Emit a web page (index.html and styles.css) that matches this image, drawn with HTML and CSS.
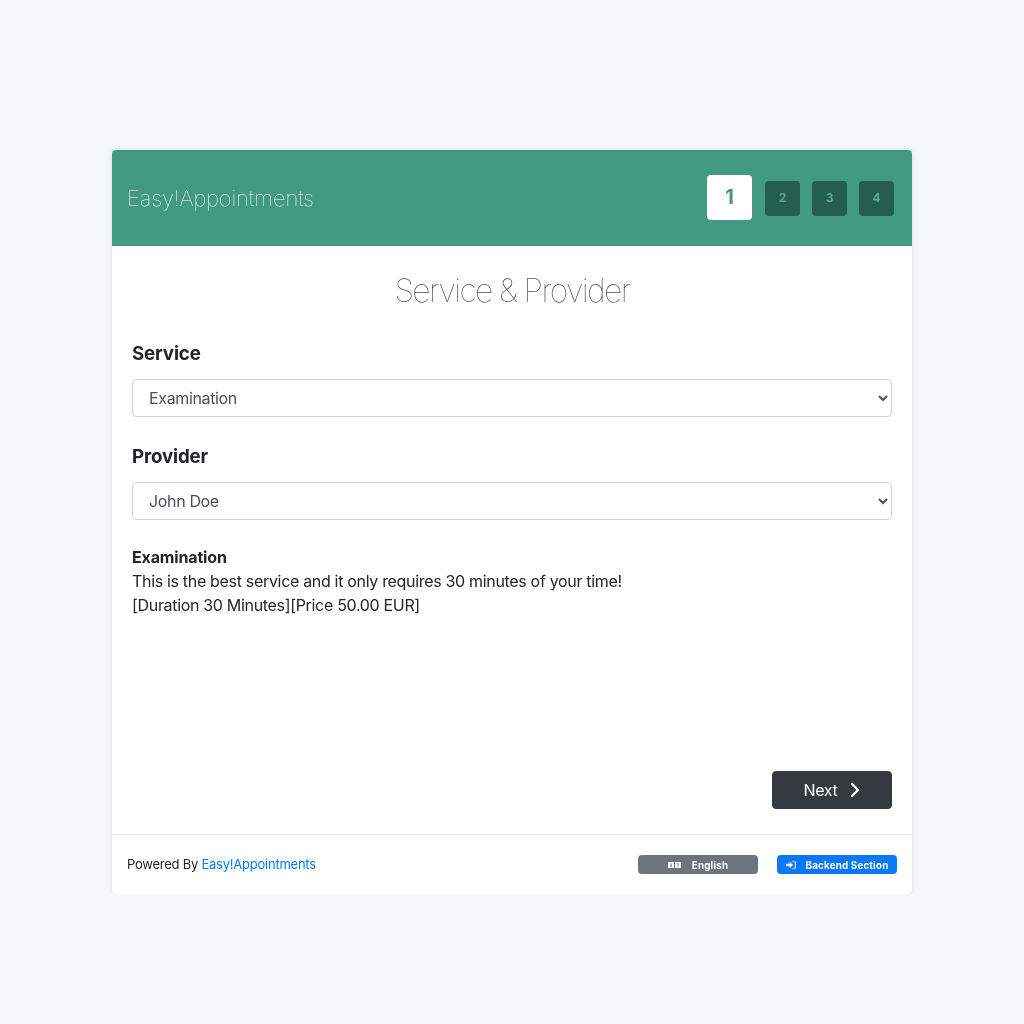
FILE: index.html
```html
<!DOCTYPE html>
<html lang="en">
<head>
<meta charset="utf-8">
<title>Easy!Appointments</title>
<link rel="stylesheet" href="styles.css">
</head>
<body>
<main class="card">
  <header class="header">
    <span class="brand">Easy!Appointments</span>
    <div class="steps">
      <div class="step active">1</div>
      <div class="step">2</div>
      <div class="step">3</div>
      <div class="step">4</div>
    </div>
  </header>
  <section class="content">
    <h2 class="title">Service &amp; Provider</h2>
    <div class="field">
      <label class="label" for="service">Service</label>
      <select class="select" id="service"><option>Examination</option></select>
    </div>
    <div class="field">
      <label class="label" for="provider">Provider</label>
      <select class="select" id="provider"><option>John Doe</option></select>
    </div>
    <div class="details">
      <strong>Examination</strong><br>
      This is the best service and it only requires 30 minutes of your time!<br>
      [Duration 30 Minutes][Price 50.00 EUR]
    </div>
    <div class="command">
      <button class="next" type="button">Next
        <svg class="chev" viewBox="0 0 12 16" width="12" height="16"><path d="M3 2l6 6-6 6" fill="none" stroke="currentColor" stroke-width="2.4" stroke-linecap="round" stroke-linejoin="round"/></svg>
      </button>
    </div>
  </section>
  <footer class="footer">
    <span class="powered">Powered By <a class="link" href="#">Easy!Appointments</a></span>
    <div class="actions">
      <a class="pill grey" href="#">
        <svg class="pill-icon" viewBox="0 0 13 6" width="13" height="6"><path fill="currentColor" d="M0 0h6v6H0zM7 0h6v6H7z"/><path fill="#6c757d" d="M2 4.800L2.800 1.200h.4L4 4.800H3.300L3.150 4h-.3L2.700 4.800zM8.800 1.500h2.400v.7h-.8v2.500h-.8V2.200h-.8z"/></svg>
        <span>English</span>
      </a>
      <a class="pill blue" href="#">
        <svg class="pill-icon" viewBox="0 0 12 10" width="10" height="8"><path fill="currentColor" d="M4.500.8L8.600 5 4.500 9.200V6.500H0v-3h4.500zM8 0h2.500A1.500 1.500 0 0 1 12 1.500v7A1.500 1.500 0 0 1 10.500 10H8V8.800h2.300a.5.500 0 0 0 .5-.5V1.700a.5.500 0 0 0-.5-.5H8z"/></svg>
        <span>Backend Section</span>
      </a>
    </div>
  </footer>
</main>
</body>
</html>
```
FILE: styles.css
```css
* { box-sizing: border-box; }
html, body { margin: 0; padding: 0; }
body {
  background: #f4f8fb;
  font-family: Inter, "Liberation Sans", sans-serif;
  font-size: 16px;
  line-height: 24px;
  color: #212529;
  padding-top: 150px;
}
.card {
  width: 800px;
  height: 744px;
  margin: 0 auto;
  background: #fff;
  border-radius: 4px;
  box-shadow: 0 1px 6px rgba(0, 0, 0, 0.1);
  display: flex;
  flex-direction: column;
  overflow: hidden;
  will-change: opacity;
}
.header {
  height: 96px;
  flex: none;
  background: #429a82;
  display: flex;
  align-items: center;
  justify-content: space-between;
  padding: 0 18px 0 15px;
}
.brand {
  color: #fff;
  font-size: 22px;
  font-weight: 100;
  letter-spacing: -0.12px;
}
.steps { display: flex; align-items: center; gap: 12px; }
.step {
  width: 35px;
  height: 35px;
  border-radius: 4px;
  background: #255d4e;
  color: #50b08f;
  font-size: 12px;
  font-weight: 700;
  display: flex;
  align-items: center;
  justify-content: center;
}
.step.active {
  width: 45px;
  height: 45px;
  margin-right: 1px;
  margin-bottom: 2px;
  background: #fff;
  color: #429a82;
  font-size: 20px;
}
.content {
  flex: 1;
  padding: 0 20px;
  display: flex;
  flex-direction: column;
}
.title {
  margin: 24px 0 28px;
  font-size: 32px;
  line-height: 42px;
  font-weight: 100;
  color: #495057;
  text-align: center;
  letter-spacing: -1.6px;
}
.field + .field { margin-top: 26px; }
.label {
  display: block;
  font-size: 18.700px;
  font-weight: 700;
  line-height: 27px;
  margin-bottom: 12px;
  letter-spacing: -0.15px;
}
.select {
  display: block;
  width: 100%;
  height: 38px;
  padding: 6px 12px;
  border: 1px solid #ced4da;
  border-radius: 4px;
  background: #fff;
  color: #495057;
  font: 400 16px/24px Inter, "Liberation Sans", sans-serif;
  letter-spacing: -0.35px;
}
.details { margin-top: 25px; letter-spacing: -0.32px; }
.details strong { font-weight: 700; letter-spacing: -0.15px; }
.command {
  margin-top: auto;
  display: flex;
  justify-content: flex-end;
  padding-bottom: 25px;
}
.next {
  width: 120px;
  height: 38px;
  border: 1px solid #343a40;
  border-radius: 4px;
  background: #343a40;
  color: #fff;
  font: 400 16px/24px Inter, "Liberation Sans", sans-serif;
  letter-spacing: -0.3px;
  display: flex;
  align-items: center;
  justify-content: center;
  gap: 11px;
  padding: 0;
}
.footer {
  height: 60px;
  flex: none;
  border-top: 1px solid #e9ecef;
  display: flex;
  align-items: center;
  justify-content: space-between;
  padding: 0 15px;
}
.powered { font-size: 13px; letter-spacing: -0.24px; margin-top: -1px; }
.link { color: #007bff; text-decoration: none; }
.actions { display: flex; gap: 19px; }
.pill {
  height: 19px;
  border-radius: 4px;
  color: #fff;
  font-size: 9.750px;
  font-weight: 700;
  letter-spacing: 0.2px;
  text-decoration: none;
  display: flex;
  align-items: center;
  justify-content: center;
  width: 120px;
}
.pill span { padding-top: 2px; }
.grey { background: #6c757d; gap: 11px; }
.blue { background: #0d78f5; gap: 10px; }
.pill-icon { flex: none; }
```
